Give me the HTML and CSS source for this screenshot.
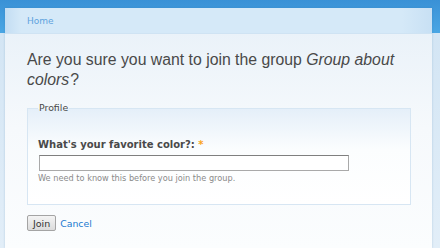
FILE: index.html
```html
<!DOCTYPE html>
<html>
<head>
<meta charset="utf-8">
<link rel="stylesheet" href="styles.css">
</head>
<body>
<div class="page">
  <div class="panel">
    <div class="crumb"><a href="#" class="crumb-link">Home</a></div>
    <div class="content">
      <h2 class="title">Are you sure you want to join the group <em class="name">Group about colors</em>?</h2>
      <fieldset class="group">
        <legend class="legend">Profile</legend>
        <label class="label">What's your favorite color?: <span class="req">*</span></label>
        <input class="field" type="text">
        <div class="desc">We need to know this before you join the group.</div>
      </fieldset>
      <div class="actions">
        <button class="btn">Join</button>
        <a href="#" class="cancel">Cancel</a>
      </div>
    </div>
  </div>
</div>
</body>
</html>
```
FILE: styles.css
```css
html, body {
  margin: 0;
  padding: 0;
  height: 100%;
}
body {
  background: #d9e8f5;
  font-family: "DejaVu Sans", Verdana, sans-serif;
  font-size: 10px;
  color: #494949;
}
.page {
  height: 248px;
  box-sizing: border-box;
  padding: 8px 8px 0 5px;
  background: linear-gradient(to bottom, #3991d6 0, #4aa6e4 33px, #d3e5f4 33px, #e2eef8 248px);
}
.panel {
  height: 240px;
  background: linear-gradient(to bottom, #eaf2f9 25px, #f6f9fc 120px, #fbfdfe 240px);
  box-shadow: 0 0 2px rgba(40, 100, 160, 0.25);
}
.crumb {
  height: 25px;
  line-height: 25px;
  padding-left: 22px;
  background: linear-gradient(to right, #c3ddf3 0, #d5e9f8 16px, #d5e9f8 calc(100% - 30px), #c8e0f4 100%);
  border-bottom: 1px solid #cfe3f3;
}
.crumb-link {
  color: #5ea3de;
  text-decoration: none;
  font-size: 9px;
}
.content {
  padding: 16px 21px 0 22px;
}
.title {
  margin: 0;
  font-family: "Liberation Sans", Arial, sans-serif;
  font-weight: normal;
  font-size: 15.8px;
  line-height: 20px;
  color: #494949;
}
.name {
  padding-right: 1px;
}
.group {
  margin: 12px 0 0 0;
  padding: 10px 0 20px 10px;
  border: 1px solid #d7e6f3;
  background: linear-gradient(to bottom, #e5eff9 0, #fbfdfe 40px, #ffffff 100%);
}
.legend {
  padding: 0 1px;
  margin-left: 0;
  font-size: 9.4px;
  line-height: 12px;
  color: #494949;
}
.label {
  display: block;
  font-weight: bold;
  font-size: 10px;
  line-height: 13px;
  margin-top: 14px;
}
.req {
  color: #faa41b;
}
.field {
  display: block;
  width: 310px;
  height: 16px;
  box-sizing: border-box;
  margin: 4px 0 0 1px;
  border: 1px solid #a9a9a9;
  border-top-color: #7f7f7f;
  background: #fff;
  padding: 0;
}
.desc {
  font-size: 8.2px;
  color: #8a8a8a;
  margin-top: 2px;
  line-height: 11px;
}
.actions {
  margin-top: 10px;
  display: flex;
  align-items: center;
  gap: 4px;
}
.btn {
  height: 16px;
  padding: 0 5px;
  font-family: "DejaVu Sans", Verdana, sans-serif;
  font-size: 9.5px;
  color: #333;
  border: 1px solid #a4a4a4;
  border-radius: 2px;
  background: linear-gradient(to bottom, #f4f4f4, #dcdcdc);
}
.cancel {
  color: #1b7ad0;
  text-decoration: none;
  font-size: 9.3px;
}
```
